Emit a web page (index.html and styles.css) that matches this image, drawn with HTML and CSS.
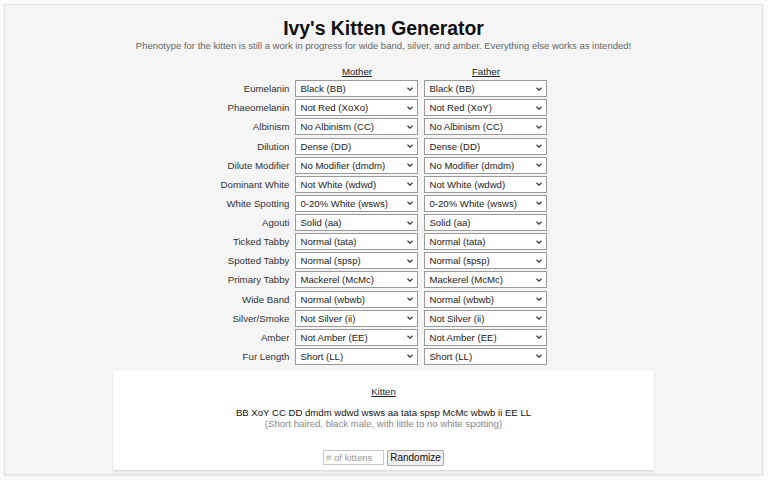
FILE: index.html
```html
<!DOCTYPE html>
<html>
<head>
<meta charset="utf-8">
<link rel="stylesheet" href="styles.css">
</head>
<body>
<div class="panel">
  <h1 class="title">Ivy's Kitten Generator</h1>
  <p class="subtitle">Phenotype for the kitten is still a work in progress for wide band, silver, and amber. Everything else works as intended!</p>
  <div class="genes">
    <div class="head"></div>
    <div class="head"><span>Mother</span></div>
    <div class="head"><span>Father</span></div>

    <label>Eumelanin</label>
    <select><option>Black (BB)</option></select>
    <select><option>Black (BB)</option></select>

    <label>Phaeomelanin</label>
    <select><option>Not Red (XoXo)</option></select>
    <select><option>Not Red (XoY)</option></select>

    <label>Albinism</label>
    <select><option>No Albinism (CC)</option></select>
    <select><option>No Albinism (CC)</option></select>

    <label>Dilution</label>
    <select><option>Dense (DD)</option></select>
    <select><option>Dense (DD)</option></select>

    <label>Dilute Modifier</label>
    <select><option>No Modifier (dmdm)</option></select>
    <select><option>No Modifier (dmdm)</option></select>

    <label>Dominant White</label>
    <select><option>Not White (wdwd)</option></select>
    <select><option>Not White (wdwd)</option></select>

    <label>White Spotting</label>
    <select><option>0-20% White (wsws)</option></select>
    <select><option>0-20% White (wsws)</option></select>

    <label>Agouti</label>
    <select><option>Solid (aa)</option></select>
    <select><option>Solid (aa)</option></select>

    <label>Ticked Tabby</label>
    <select><option>Normal (tata)</option></select>
    <select><option>Normal (tata)</option></select>

    <label>Spotted Tabby</label>
    <select><option>Normal (spsp)</option></select>
    <select><option>Normal (spsp)</option></select>

    <label>Primary Tabby</label>
    <select><option>Mackerel (McMc)</option></select>
    <select><option>Mackerel (McMc)</option></select>

    <label>Wide Band</label>
    <select><option>Normal (wbwb)</option></select>
    <select><option>Normal (wbwb)</option></select>

    <label>Silver/Smoke</label>
    <select><option>Not Silver (ii)</option></select>
    <select><option>Not Silver (ii)</option></select>

    <label>Amber</label>
    <select><option>Not Amber (EE)</option></select>
    <select><option>Not Amber (EE)</option></select>

    <label>Fur Length</label>
    <select><option>Short (LL)</option></select>
    <select><option>Short (LL)</option></select>
  </div>

  <div class="kitten">
    <div class="kitten-head">Kitten</div>
    <div class="genotype">BB XoY CC DD dmdm wdwd wsws aa tata spsp McMc wbwb ii EE LL</div>
    <div class="phenotype">(Short haired, black male, with little to no white spotting)</div>
    <div class="controls">
      <input class="count" type="text" placeholder="# of kittens">
      <button class="btn">Randomize</button>
    </div>
  </div>
</div>
</body>
</html>
```

FILE: styles.css
```css
html, body {
  margin: 0;
  padding: 0;
}
body {
  background: #fbfbfb;
  font-family: "Liberation Sans", Arial, sans-serif;
  color: #222;
  padding: 4px 5px 4px 4px;
  box-sizing: border-box;
  height: 480px;
  overflow: hidden;
}
.panel {
  background: #f5f5f5;
  border: 1px solid #e2e2e2;
  box-shadow: 0 1px 2px rgba(0,0,0,0.08);
  height: 471px;
  box-sizing: border-box;
  padding-top: 11px;
  display: flex;
  flex-direction: column;
  align-items: center;
}
.title {
  margin: 0;
  font-size: 19.4px;
  line-height: 24px;
  font-weight: bold;
  color: #111;
}
.subtitle {
  margin: 0;
  font-size: 9.5px;
  line-height: 12px;
  color: #666;
}
.genes {
  margin-top: 14px;
  margin-left: 1px;
  display: grid;
  grid-template-columns: auto 123px 123px;
  column-gap: 6px;
  row-gap: 2.14px;
  align-items: center;
}
.head {
  text-align: center;
  font-size: 9.7px;
  line-height: 12px;
  height: 12px;
}
.head span {
  text-decoration: underline;
}
.genes label {
  font-size: 9.7px;
  text-align: right;
  color: #333;
}
.genes select {
  -webkit-appearance: none;
  appearance: none;
  font-family: "Liberation Sans", Arial, sans-serif;
  font-size: 9.6px;
  height: 17px;
  width: 123px;
  margin: 0;
  padding: 0 0 0 4px;
  border: 1px solid #9a9a9a;
  border-radius: 0;
  background-color: #fff;
  background-image: url("data:image/svg+xml,%3Csvg xmlns='http://www.w3.org/2000/svg' width='8' height='6' viewBox='0 0 8 6'%3E%3Cpath d='M1.5 1.8 L4 4.2 L6.5 1.8' fill='none' stroke='%23333' stroke-width='1.2'/%3E%3C/svg%3E");
  background-repeat: no-repeat;
  background-position: right 3px center;
  background-size: 8px 6px;
  color: #222;
}
.kitten {
  margin-top: 6px;
  width: 541px;
  height: 99px;
  box-sizing: border-box;
  background: #fff;
  box-shadow: 0 1px 2px rgba(0,0,0,0.15);
  display: flex;
  flex-direction: column;
  align-items: center;
  padding-top: 15px;
  font-size: 9.6px;
  line-height: 11px;
}
.kitten-head {
  text-decoration: underline;
  color: #222;
}
.genotype {
  margin-top: 10px;
  color: #111;
}
.phenotype {
  color: #888;
}
.controls {
  margin-top: 21px;
  display: flex;
  gap: 3px;
  align-items: center;
}
.count {
  width: 61px;
  height: 15px;
  box-sizing: border-box;
  font-family: "Liberation Sans", Arial, sans-serif;
  font-size: 9.6px;
  padding: 0 2px;
  border: 1px solid #c8c8c8;
  margin: 0;
}
.count::placeholder {
  color: #999;
}
.btn {
  width: 57px;
  height: 16px;
  box-sizing: border-box;
  font-family: "Liberation Sans", Arial, sans-serif;
  font-size: 10px;
  padding: 0;
  border: 1px solid #aaa;
  border-radius: 1px;
  background: #efefef;
  color: #111;
  margin: 0;
}
```
